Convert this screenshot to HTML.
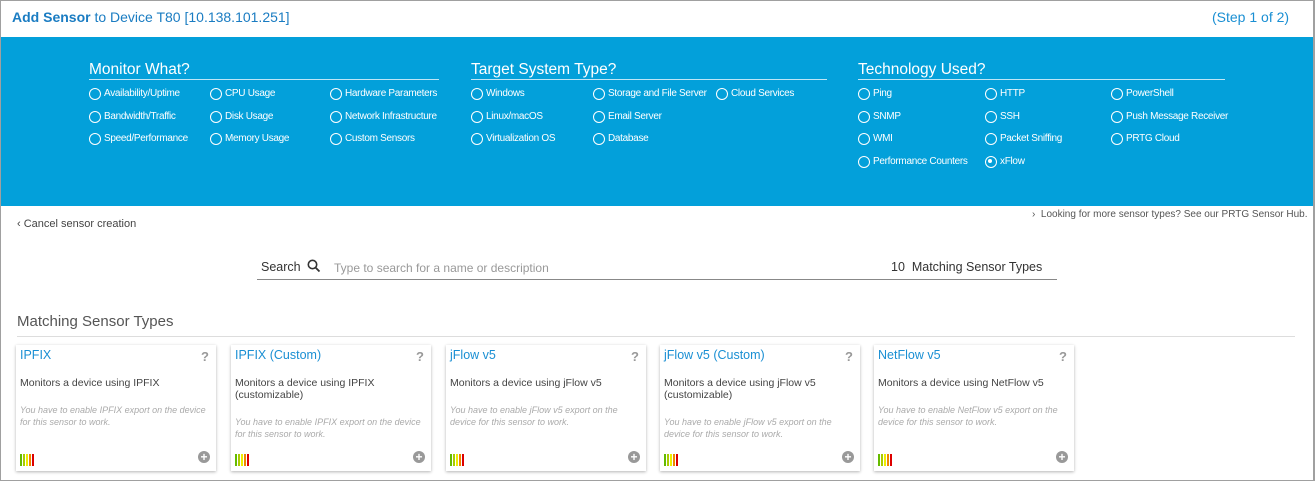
<!DOCTYPE html>
<html><head><meta charset="utf-8"><style>
*{box-sizing:border-box;margin:0;padding:0}
body{width:1315px;height:481px;position:relative;background:#fff;font-family:"Liberation Sans",sans-serif;overflow:hidden}
.frame{position:absolute;inset:0;border:1px solid #a0a0a0;border-right:2px solid #a0a0a0}
.a{position:absolute;white-space:nowrap}
.blue{position:absolute;left:1px;top:37px;width:1312px;height:169px;background:#03a0da}
.h{position:absolute;color:#fff;font-size:15.5px;top:61px}
.ul{position:absolute;height:1px;background:#bfe6f6;top:79px}
.r{position:absolute;color:#fff;font-size:10px;padding-left:15px;line-height:12px;letter-spacing:-0.3px}
.r:before{content:"";position:absolute;left:0;top:0;width:10px;height:10px;border:1.5px solid #fff;border-radius:50%}
.r.on:after{content:"";position:absolute;left:3px;top:3px;width:4px;height:4px;background:#fff;border-radius:50%}
.card{position:absolute;top:345px;width:200px;height:126px;background:#fff;box-shadow:0 1px 3px rgba(0,0,0,.3)}
.card .t{position:absolute;left:4px;top:3px;color:#1a8fd3;font-size:12.5px}
.card .q{position:absolute;right:7px;top:4px;color:#999;font-size:13px;font-weight:bold}
.card .d{position:absolute;left:4px;top:32px;color:#444;font-size:10.5px;line-height:12px;width:190px}
.card .n{position:absolute;left:4px;color:#aaa;font-style:italic;font-size:9px;line-height:12px;width:195px}
.card .bars{position:absolute;left:4px;top:109px;display:flex;gap:1px}
.bars i{display:block;width:2px;height:12px}
.card .p{position:absolute;right:6px;top:106px;width:12px;height:12px;border-radius:50%;background:#999;color:#fff;font-size:12px;line-height:12px;text-align:center;font-weight:bold}
</style></head><body>
<div class="a" style="left:12px;top:9px;font-size:14px;color:#1a7cc2"><b>Add Sensor</b> to Device T80 [10.138.101.251]</div>
<div class="a" style="left:1212px;top:9px;font-size:14px;color:#1a8fd3">(Step 1 of 2)</div>
<div class="blue"></div>
<div class="h" style="left:89px">Monitor What?</div><div class="ul" style="left:89px;width:350px"></div>
<div class="h" style="left:471px">Target System Type?</div><div class="ul" style="left:471px;width:356px"></div>
<div class="h" style="left:858px">Technology Used?</div><div class="ul" style="left:858px;width:367px"></div>

<div class="r" style="left:89px;top:88px">Availability/Uptime</div>
<div class="r" style="left:89px;top:111px">Bandwidth/Traffic</div>
<div class="r" style="left:89px;top:133px">Speed/Performance</div>
<div class="r" style="left:210px;top:88px">CPU Usage</div>
<div class="r" style="left:210px;top:111px">Disk Usage</div>
<div class="r" style="left:210px;top:133px">Memory Usage</div>
<div class="r" style="left:330px;top:88px">Hardware Parameters</div>
<div class="r" style="left:330px;top:111px">Network Infrastructure</div>
<div class="r" style="left:330px;top:133px">Custom Sensors</div>

<div class="r" style="left:471px;top:88px">Windows</div>
<div class="r" style="left:471px;top:111px">Linux/macOS</div>
<div class="r" style="left:471px;top:133px">Virtualization OS</div>
<div class="r" style="left:593px;top:88px">Storage and File Server</div>
<div class="r" style="left:593px;top:111px">Email Server</div>
<div class="r" style="left:593px;top:133px">Database</div>
<div class="r" style="left:716px;top:88px">Cloud Services</div>

<div class="r" style="left:858px;top:88px">Ping</div>
<div class="r" style="left:858px;top:111px">SNMP</div>
<div class="r" style="left:858px;top:133px">WMI</div>
<div class="r" style="left:858px;top:156px">Performance Counters</div>
<div class="r" style="left:985px;top:88px">HTTP</div>
<div class="r" style="left:985px;top:111px">SSH</div>
<div class="r" style="left:985px;top:133px">Packet Sniffing</div>
<div class="r on" style="left:985px;top:156px">xFlow</div>
<div class="r" style="left:1111px;top:88px">PowerShell</div>
<div class="r" style="left:1111px;top:111px">Push Message Receiver</div>
<div class="r" style="left:1111px;top:133px">PRTG Cloud</div>

<div class="a" style="left:17px;top:218px;font-size:11px;color:#444">‹ Cancel sensor creation</div>
<div class="a" style="left:1032px;top:209px;font-size:10px;color:#555">›&nbsp; Looking for more sensor types? See our PRTG Sensor Hub.</div>

<div class="a" style="left:261px;top:260px;font-size:12.5px;color:#333">Search</div>
<svg class="a" style="left:307px;top:259px" width="14" height="14" viewBox="0 0 14 14"><circle cx="5.5" cy="5.5" r="4.2" fill="none" stroke="#333" stroke-width="1.6"/><path d="M8.6 8.6L12.5 12.5" stroke="#333" stroke-width="1.8"/></svg>
<div class="a" style="left:334px;top:261px;font-size:12px;color:#999">Type to search for a name or description</div>
<div class="a" style="left:891px;top:260px;font-size:12.5px;color:#333">10&nbsp; Matching Sensor Types</div>
<div class="a" style="left:257px;top:279px;width:800px;height:1px;background:#888"></div>

<div class="a" style="left:17px;top:313px;font-size:15px;color:#555">Matching Sensor Types</div>
<div class="a" style="left:17px;top:336px;width:1278px;height:1px;background:#ddd"></div>

<div class="card" style="left:16px"><div class="t">IPFIX</div><div class="q">?</div><div class="d">Monitors a device using IPFIX</div><div class="n" style="top:59px">You have to enable IPFIX export on the device for this sensor to work.</div><div class="bars"><i style="background:#6b0"></i><i style="background:#ac0"></i><i style="background:#ee0"></i><i style="background:#e80"></i><i style="background:#d00"></i></div><div class="p">+</div></div>
<div class="card" style="left:231px"><div class="t">IPFIX (Custom)</div><div class="q">?</div><div class="d">Monitors a device using IPFIX (customizable)</div><div class="n" style="top:71px">You have to enable IPFIX export on the device for this sensor to work.</div><div class="bars"><i style="background:#6b0"></i><i style="background:#ac0"></i><i style="background:#ee0"></i><i style="background:#e80"></i><i style="background:#d00"></i></div><div class="p">+</div></div>
<div class="card" style="left:446px"><div class="t">jFlow v5</div><div class="q">?</div><div class="d">Monitors a device using jFlow v5</div><div class="n" style="top:59px">You have to enable jFlow v5 export on the device for this sensor to work.</div><div class="bars"><i style="background:#6b0"></i><i style="background:#ac0"></i><i style="background:#ee0"></i><i style="background:#e80"></i><i style="background:#d00"></i></div><div class="p">+</div></div>
<div class="card" style="left:660px"><div class="t">jFlow v5 (Custom)</div><div class="q">?</div><div class="d">Monitors a device using jFlow v5 (customizable)</div><div class="n" style="top:71px">You have to enable jFlow v5 export on the device for this sensor to work.</div><div class="bars"><i style="background:#6b0"></i><i style="background:#ac0"></i><i style="background:#ee0"></i><i style="background:#e80"></i><i style="background:#d00"></i></div><div class="p">+</div></div>
<div class="card" style="left:874px"><div class="t">NetFlow v5</div><div class="q">?</div><div class="d">Monitors a device using NetFlow v5</div><div class="n" style="top:59px">You have to enable NetFlow v5 export on the device for this sensor to work.</div><div class="bars"><i style="background:#6b0"></i><i style="background:#ac0"></i><i style="background:#ee0"></i><i style="background:#e80"></i><i style="background:#d00"></i></div><div class="p">+</div></div>
<div class="frame"></div>
</body></html>
